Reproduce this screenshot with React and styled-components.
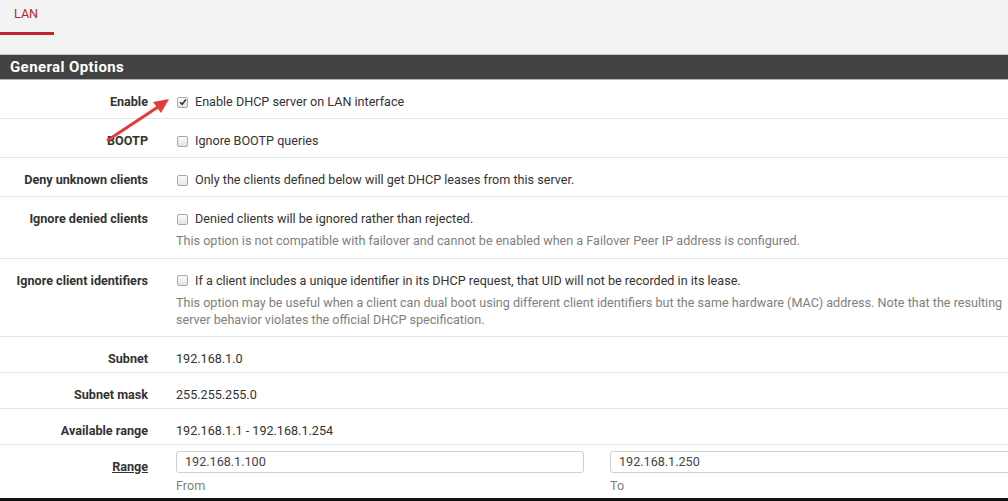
import React from "react";
import styled, { createGlobalStyle } from "styled-components";

const Global = createGlobalStyle`
  html, body { margin: 0; padding: 0; background: #fff; }
  body { font-family: Roboto, "Liberation Sans", sans-serif; font-size: 12.6px; color: #333; overflow: hidden; }
  * { box-sizing: border-box; }
`;

const Page = styled.div`
  position: relative;
  width: 1008px;
  height: 501px;
  overflow: hidden;
  display: flex;
  flex-direction: column;
`;

const TabBar = styled.div`
  height: 55px;
  background: #f3f3f3;
  border-bottom: 1px solid #c9c9c9;
  display: flex;
  align-items: flex-start;
`;

const Tab = styled.div`
  width: 54px;
  height: 35px;
  padding: 5px 0 0 14px;
  color: #b4262b;
  font-size: 12.6px;
  line-height: 18px;
  border-bottom: 3px solid #c0272d;
`;

const PanelHeader = styled.div`
  height: 25px;
  background: #424242;
  border-bottom: 1px solid #b5b5b5;
  color: #fff;
  font-weight: 700;
  font-size: 15px;
  letter-spacing: 0.4px;
  line-height: 24px;
  padding-left: 10px;
`;

const Row = styled.div`
  display: grid;
  grid-template-columns: 161px 1fr;
  padding: ${(p) => p.$top ?? 13}px 0 ${(p) => p.$bottom ?? 7}px;
  border-bottom: ${(p) => (p.$last ? "none" : "1px solid #e6e6e6")};
  line-height: 18px;
`;

const Label = styled.div`
  text-align: right;
  padding-right: 13px;
  font-weight: 700;
  color: #333;
  padding-top: ${(p) => p.$offset ?? 0}px;
  text-decoration: ${(p) => (p.$underline ? "underline" : "none")};
`;

const Content = styled.div`
  padding-left: 15px;
  padding-right: 0;
`;

const CheckLine = styled.label`
  display: flex;
  align-items: center;
  gap: 7px;
`;

const Box = styled.span`
  width: 11px;
  height: 11px;
  margin-left: 1px;
  border: 1px solid #a8a8a8;
  border-radius: 2px;
  background: linear-gradient(#fbfbfb, #e4e4e4);
  display: inline-flex;
  align-items: center;
  justify-content: center;
  flex: none;
`;

const Help = styled.div`
  margin-top: 4px;
  color: #808080;
  line-height: 17.5px;
`;

const InputGrid = styled.div`
  display: grid;
  grid-template-columns: 408px 408px;
  column-gap: 26px;
`;

const Field = styled.div`
  display: flex;
  flex-direction: column;
`;

const Input = styled.div`
  height: 22px;
  border: 1px solid #cfcfcf;
  border-radius: 3px;
  padding-left: 8px;
  line-height: 20px;
  color: #444;
  background: #fff;
`;

const Sub = styled.div`
  color: #808080;
  margin-top: 4px;
  line-height: 18px;
`;

const Spacer = styled.div`
  flex: 1;
`;

const BottomEdge = styled.div`
  height: 3px;
  background: #111;
`;

const Arrow = styled.svg`
  position: absolute;
  left: 100px;
  top: 90px;
  width: 80px;
  height: 55px;
  overflow: visible;
`;

function Check({ checked }) {
  return (
    <Box>
      {checked && (
        <svg width="8" height="8" viewBox="0 0 8 8">
          <path d="M1 4.2 L3.1 6.3 L7 1.6" fill="none" stroke="#333" strokeWidth="1.6" />
        </svg>
      )}
    </Box>
  );
}

export default function App() {
  return (
    <Page>
      <Global />
      <TabBar>
        <Tab>LAN</Tab>
      </TabBar>
      <PanelHeader>General Options</PanelHeader>

      <Row>
        <Label>Enable</Label>
        <Content>
          <CheckLine><Check checked />Enable DHCP server on LAN interface</CheckLine>
        </Content>
      </Row>
      <Row>
        <Label>BOOTP</Label>
        <Content>
          <CheckLine><Check />Ignore BOOTP queries</CheckLine>
        </Content>
      </Row>
      <Row>
        <Label>Deny unknown clients</Label>
        <Content>
          <CheckLine><Check />Only the clients defined below will get DHCP leases from this server.</CheckLine>
        </Content>
      </Row>
      <Row $bottom={8}>
        <Label>Ignore denied clients</Label>
        <Content>
          <CheckLine><Check />Denied clients will be ignored rather than rejected.</CheckLine>
          <Help>This option is not compatible with failover and cannot be enabled when a Failover Peer IP address is configured.</Help>
        </Content>
      </Row>
      <Row $bottom={7}>
        <Label>Ignore client identifiers</Label>
        <Content>
          <CheckLine><Check />If a client includes a unique identifier in its DHCP request, that UID will not be recorded in its lease.</CheckLine>
          <Help>This option may be useful when a client can dual boot using different client identifiers but the same hardware (MAC) address. Note that the resulting server behavior violates the official DHCP specification.</Help>
        </Content>
      </Row>
      <Row $bottom={4}>
        <Label>Subnet</Label>
        <Content>192.168.1.0</Content>
      </Row>
      <Row $bottom={4}>
        <Label>Subnet mask</Label>
        <Content>255.255.255.0</Content>
      </Row>
      <Row $bottom={4}>
        <Label>Available range</Label>
        <Content>192.168.1.1 - 192.168.1.254</Content>
      </Row>
      <Row $top={6} $bottom={0} $last>
        <Label $offset={7} $underline>Range</Label>
        <Content>
          <InputGrid>
            <Field>
              <Input>192.168.1.100</Input>
              <Sub>From</Sub>
            </Field>
            <Field>
              <Input>192.168.1.250</Input>
              <Sub>To</Sub>
            </Field>
          </InputGrid>
        </Content>
      </Row>
      <Spacer />
      <BottomEdge />

      <Arrow viewBox="0 0 80 55">
        <line x1="8" y1="50" x2="61" y2="15" stroke="#e53a3a" strokeWidth="3" strokeLinecap="round" />
        <polygon points="69,9 53,12 61,23" fill="#e53a3a" />
      </Arrow>
    </Page>
  );
}
